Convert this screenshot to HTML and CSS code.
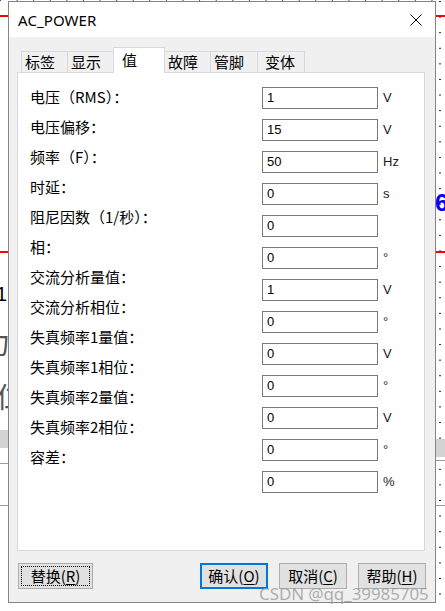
FILE: index.html
```html
<!DOCTYPE html>
<html lang="zh">
<head>
<meta charset="utf-8">
<title>AC_POWER</title>
<link rel="stylesheet" href="styles.css">
</head>
<body>
<div class="canvas">
  <div class="dots-row"></div>
  <div class="red red-top"></div>
  <div class="red red-mid"></div>
  <div class="dots-col"></div>
  <span class="bg-six">6</span>
  <span class="bg-one">1</span>
  <span class="bg-glyph g1">力</span>
  <span class="bg-glyph g2">仁</span>
  <div class="band band-left"></div>
  <div class="band band-right"></div>
  <div class="hline hl1"></div>
  <div class="hline hl2"></div>
  <div class="hline hl3"></div>
</div>

<div class="dialog">
  <div class="titlebar">
    <span class="title">AC_POWER</span>
    <svg class="close" width="12" height="12" viewBox="0 0 12 12"><path d="M0.5 0.5 L11.5 11.5 M11.5 0.5 L0.5 11.5" stroke="#000" stroke-width="1" fill="none"/></svg>
  </div>
  <div class="content">
    <div class="tabs">
      <div class="tab">标签</div>
      <div class="tab">显示</div>
      <div class="tab tab-active">值</div>
      <div class="tab">故障</div>
      <div class="tab tab-w48">管脚</div>
      <div class="tab tab-w48 tab-pad">变体</div>
    </div>
    <div class="panel">
      <div class="labels">
        <div class="label">电压（RMS）：</div>
        <div class="label">电压偏移：</div>
        <div class="label">频率（F）：</div>
        <div class="label">时延：</div>
        <div class="label">阻尼因数（1/秒）：</div>
        <div class="label">相：</div>
        <div class="label">交流分析量值：</div>
        <div class="label">交流分析相位：</div>
        <div class="label">失真频率1量值：</div>
        <div class="label">失真频率1相位：</div>
        <div class="label">失真频率2量值：</div>
        <div class="label">失真频率2相位：</div>
        <div class="label">容差：</div>
      </div>
      <div class="fields">
        <div class="field"><div class="input">1</div><span class="unit">V</span></div>
        <div class="field"><div class="input">15</div><span class="unit">V</span></div>
        <div class="field"><div class="input">50</div><span class="unit">Hz</span></div>
        <div class="field"><div class="input">0</div><span class="unit">s</span></div>
        <div class="field"><div class="input">0</div><span class="unit"></span></div>
        <div class="field"><div class="input">0</div><span class="unit">°</span></div>
        <div class="field"><div class="input">1</div><span class="unit">V</span></div>
        <div class="field"><div class="input">0</div><span class="unit">°</span></div>
        <div class="field"><div class="input">0</div><span class="unit">V</span></div>
        <div class="field"><div class="input">0</div><span class="unit">°</span></div>
        <div class="field"><div class="input">0</div><span class="unit">V</span></div>
        <div class="field"><div class="input">0</div><span class="unit">°</span></div>
        <div class="field"><div class="input">0</div><span class="unit">%</span></div>
      </div>
    </div>
    <div class="buttons">
      <div class="btn btn-replace">替换(<u>R</u>)</div>
      <div class="spacer"></div>
      <div class="btn btn-default">确认(<u>O</u>)</div>
      <div class="btn">取消(<u>C</u>)</div>
      <div class="btn">帮助(<u>H</u>)</div>
    </div>
  </div>
</div>

<div class="watermark">CSDN @qq_39985705</div>
</body>
</html>
```

FILE: styles.css
```css
* { box-sizing: border-box; }
html, body { margin: 0; padding: 0; }
body {
  width: 445px;
  height: 611px;
  background: #fff;
  position: relative;
  overflow: hidden;
  font-family: "Noto Sans CJK SC", "Noto Sans", sans-serif;
  color: #000;
}

/* background schematic canvas */
.canvas { position: absolute; left: 0; top: 0; width: 445px; height: 611px; }
.dots-row {
  position: absolute; left: 0; top: 0; width: 445px; height: 1px;
  background-image: linear-gradient(90deg, #444 1px, transparent 1px);
  background-size: 16.6px 1px;
}
.dots-col {
  position: absolute; left: 439px; top: 1px; width: 2px; height: 600px;
  background-image: linear-gradient(#222 1px, transparent 1px);
  background-size: 2px 15.6px;
}
.red { position: absolute; left: 0; width: 445px; height: 2px; background: #ff0000; }
.red-top { top: 15px; }
.red-mid { top: 251px; }
.bg-six {
  position: absolute; left: 435px; top: 189px;
  font: bold 24px "Liberation Sans", sans-serif; color: #0000ff;
}
.bg-one {
  position: absolute; left: -4px; top: 283px;
  font: 20px "Liberation Sans", sans-serif; color: #000;
}
.bg-glyph {
  position: absolute; font-size: 28px; color: #555; line-height: 1;
  font-family: "Noto Sans CJK SC", sans-serif;
}
.g1 { left: -18px; top: 328px; }
.g2 { left: -4px; top: 382px; }
.band { position: absolute; height: 18px; background: #d2d2d2; }
.band-left { left: 0; top: 430px; width: 10px; }
.band-right { left: 436px; top: 439px; width: 9px; }
.hline { position: absolute; height: 1px; background: #9a9a9a; }
.hl1 { left: 0; top: 463px; width: 10px; }
.hl2 { left: 436px; top: 460px; width: 9px; }
.hl3 { left: 0; top: 505px; width: 445px; }

/* dialog window */
.dialog {
  position: relative;
  margin: 1px 0 0 8px;
  width: 428px;
  height: 602px;
  border: 1px solid #858585;
  background: #f0f0f0;
  display: flex;
  flex-direction: column;
}
.titlebar {
  height: 35px;
  background: #fff;
  display: flex;
  align-items: center;
  justify-content: space-between;
  padding: 0 13px 0 9px;
}
.title {
  font-family: "Noto Sans", "Open Sans", sans-serif;
  font-size: 15px;
  color: #000;
  letter-spacing: 0.1px;
}
.close { display: block; }

.content {
  flex: 1;
  display: flex;
  flex-direction: column;
  padding: 10px 10px 0 8px;
}

/* tabs */
.tabs {
  display: flex;
  align-items: flex-end;
  height: 25px;
  padding-left: 4px;
  position: relative;
  z-index: 1;
}
.tab {
  width: 47px;
  height: 21px;
  margin-right: -1px;
  border: 1px solid #d9d9d9;
  border-bottom: none;
  background: #f0f0f0;
  font-size: 15px;
  line-height: 19px;
  padding-left: 3px;
  white-space: nowrap;
}
.tab-w48 { width: 48px; }
.tab-pad { padding-left: 7px; }
.tab-active {
  width: 52px;
  height: 26px;
  margin-bottom: -1px;
  background: #fff;
  padding-top: 2px;
  padding-left: 8px;
  position: relative;
  z-index: 2;
}

/* panel */
.panel {
  height: 479px;
  background: #fff;
  border: 1px solid #d9d9d9;
  display: flex;
  padding-left: 12px;
}
.labels {
  width: 232px;
  padding-top: 9px;
}
.label {
  height: 30px;
  line-height: 30px;
  font-size: 15px;
  white-space: nowrap;
}
.fields {
  padding-top: 14px;
  display: flex;
  flex-direction: column;
  gap: 10px;
}
.field {
  display: flex;
  align-items: center;
  height: 22px;
}
.input {
  width: 116px;
  height: 22px;
  border: 1px solid #7a7a7a;
  background: #fff;
  font: 13px/20px "Liberation Sans", Arial, sans-serif;
  padding-left: 4px;
  color: #000;
}
.unit {
  margin-left: 5px;
  font: 13px/20px "Liberation Sans", Arial, sans-serif;
  color: #1a1a1a;
}

/* buttons */
.buttons {
  display: flex;
  align-items: center;
  margin-top: 12px;
  padding-left: 1px;
  gap: 11px;
}
.spacer { flex: 1; }
.btn {
  width: 68px;
  height: 26px;
  border: 1px solid #adadad;
  background: #e1e1e1;
  font-size: 15px;
  line-height: 24px;
  text-align: center;
  white-space: nowrap;
}
.btn u { text-underline-offset: 2px; }
.btn-replace {
  width: 75px;
  outline: 1px dotted #000;
  outline-offset: -4px;
}
.btn-default {
  border: 2px solid #0078d7;
  line-height: 22px;
}
.btn:last-child { margin-right: -1px; }

/* watermark overlay */
.watermark {
  position: absolute;
  left: 259px;
  top: 584px;
  font-family: "Noto Sans", sans-serif;
  font-size: 17px;
  line-height: 20px;
  color: rgba(150, 150, 150, 0.75);
  white-space: nowrap;
  letter-spacing: -0.1px;
}
```
